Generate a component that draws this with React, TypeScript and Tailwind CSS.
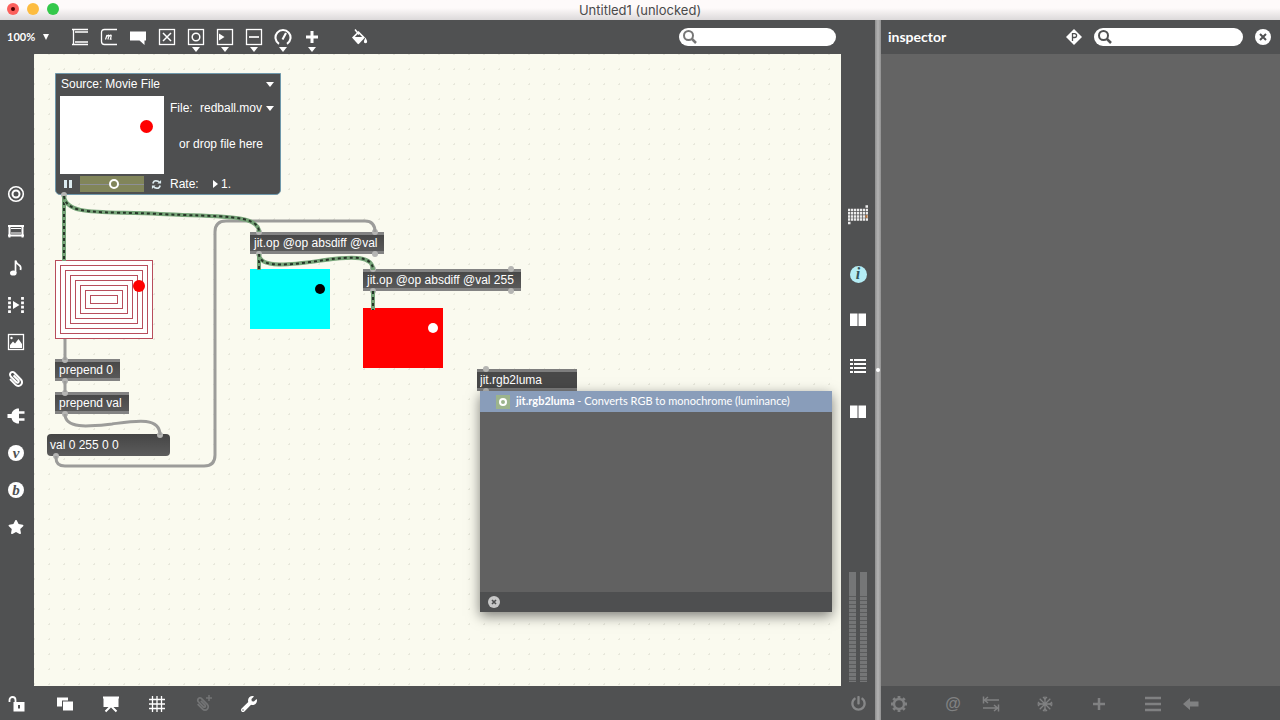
import type { ReactNode } from "react";
import { FaPaperclip, FaPowerOff, FaStar, FaWrench } from "react-icons/fa";

export default function App() {
  return (
    <div className="flex h-screen flex-col overflow-hidden bg-[#505152] font-['Lato',sans-serif] text-white">
      <TitleBar />
      <div className="flex min-h-0 flex-1">
        <main className="flex min-w-0 flex-1 flex-col">
          <Toolbar />
          <div className="flex min-h-0 flex-1">
            <ObjectBar />
            <Patcher />
            <PanelBar />
          </div>
          <PatcherFooter />
        </main>
        <div className="flex w-[6px] items-center justify-center bg-linear-to-r from-[#8f8f8f] via-[#b4b4b4] to-[#909090]">
          <span className="size-1 rounded-full bg-white" />
        </div>
        <Inspector />
      </div>
    </div>
  );
}

function TitleBar() {
  return (
    <header className="relative flex h-5 shrink-0 items-center justify-center bg-linear-to-b from-[#fefafa] from-40% to-[#dcd9da]">
      <div className="absolute top-[3px] left-[7px] flex gap-2">
        <button aria-label="Close" className="flex size-3 items-center justify-center rounded-full bg-[#fc605c]">
          <span className="size-1 rounded-full bg-[#4d0000]" />
        </button>
        <button aria-label="Minimize" className="size-3 rounded-full bg-[#fdbc40]" />
        <button aria-label="Zoom" className="size-3 rounded-full bg-[#34c84a]" />
      </div>
      <h1 className="font-['Inter',sans-serif] text-[13px] leading-[18px] text-[#4a4a4a]">Untitled1 (unlocked)</h1>
    </header>
  );
}

function Caret({ className = "" }: { className?: string }) {
  return (
    <svg viewBox="0 0 8 5" className={`pointer-events-none h-[5px] w-2 fill-current ${className}`}>
      <path d="M0 0h8L4 5z" />
    </svg>
  );
}

function Icon({ children, className = "" }: { children: ReactNode; className?: string }) {
  return (
    <svg viewBox="0 0 18 18" fill="none" stroke="currentColor" strokeWidth="1.3" className={`size-[18px] ${className}`}>
      {children}
    </svg>
  );
}

const TOOLS: { label: string; menu?: boolean; art: ReactNode }[] = [
  { label: "Object", art: <><path d="M17 1.500H1M17 16.500H1M2.500 1.500v15" /><path d="M4 4h13M4 14h13" /></> },
  {
    label: "Message",
    art: (
      <>
        <path d="M17 1.500H4.500q-3 0-3 3v9q0 3 3 3H17" />
        <path d="M5.500 11.500L7 7M6.700 8.500q2.300-2.600 2.200-.6l-1 3.600M8.700 8.500q2.600-2.600 2.500-.6l-.8 3.200h1.200" strokeWidth="1.200" />
      </>
    ),
  },
  { label: "Comment", art: <path d="M1 3.500h16v9h-1.500V17l-5-4.500H1z" fill="currentColor" stroke="none" /> },
  { label: "Toggle", art: <><rect x="1.500" y="1.500" width="15" height="15" /><path d="M5 5l8 8M13 5l-8 8" strokeWidth="1.500" /></> },
  { label: "Button", menu: true, art: <><rect x="1.500" y="1.500" width="15" height="15" /><circle cx="9" cy="9" r="3.800" strokeWidth="1.500" /></> },
  { label: "Playback", menu: true, art: <><rect x="1.500" y="1.500" width="15" height="15" /><path d="M3 5.500L8.500 9 3 12.500z" fill="currentColor" stroke="none" /></> },
  { label: "Slider", menu: true, art: <><rect x="1.500" y="1.500" width="15" height="15" /><path d="M4 9h10" strokeWidth="1.700" /></> },
  { label: "Dial", menu: true, art: <path d="M5 15.800a7.500 7.500 0 1 1 8 0M8.500 11.500l3.500-6.500" strokeWidth="2.100" /> },
  { label: "Add", menu: true, art: <path d="M9 3v12M3 9h12" strokeWidth="3" /> },
];

function Toolbar() {
  return (
    <div className="flex h-[34px] shrink-0 items-center pr-[39px]">
      <div className="relative ml-[7px] flex w-[42px] items-center">
        <select aria-label="Zoom level" className="w-full appearance-none bg-transparent text-[11px] font-bold">
          <option>100%</option>
        </select>
        <svg viewBox="0 0 6 6" className="pointer-events-none absolute right-0 size-[6px] fill-current"><path d="M0 0h6L3 6z" /></svg>
      </div>
      <div className="ml-4 flex">
        {TOOLS.map((t) => (
          <button key={t.label} aria-label={t.label} className="relative flex h-[34px] w-[29px] items-center justify-center">
            <Icon>{t.art}</Icon>
            {t.menu && <Caret className="absolute bottom-[2px]" />}
          </button>
        ))}
      </div>
      <button aria-label="Format" className="ml-[15px] flex w-9 justify-center">
        <Icon>
          <path d="M2 9.500L8.500 3l6.500 6.500L9 15.800q-.7.700-1.400 0z" fill="currentColor" stroke="none" />
          <path d="M4.800 9L8.500 5.300 12.200 9z" fill="#505152" stroke="none" />
          <path d="M5 1.500L9 6.500" strokeWidth="1.500" />
          <path d="M15.500 9.500q2 3.500 1.500 5-1.500 1.500-3 0-.4-1.500 1.500-5z" fill="currentColor" stroke="none" />
        </Icon>
      </button>
      <SearchBox label="Search patcher" className="ml-auto w-[157px] text-[#777]" />
    </div>
  );
}

function SearchBox({ label, className }: { label: string; className: string }) {
  return (
    <label className={`relative flex h-[18px] items-center rounded-full bg-white ${className}`}>
      <Icon className="absolute left-[2px]">
        <circle cx="7.500" cy="7.500" r="4.500" strokeWidth="2" />
        <path d="M11 11l4 4" strokeWidth="2.500" />
      </Icon>
      <input type="text" aria-label={label} className="w-full bg-transparent pr-2 pl-6 text-xs text-black outline-none" />
    </label>
  );
}

function Badge({ letter }: { letter: string }) {
  return (
    <span className="flex size-4 items-center justify-center rounded-full bg-white font-['Liberation_Serif',serif] text-[15px] leading-4 font-bold text-[#505152] italic">
      {letter}
    </span>
  );
}

const OBJECTS: { label: string; art: ReactNode }[] = [
  { label: "Objects", art: <Icon><circle cx="9" cy="9" r="7.300" strokeWidth="1.600" /><circle cx="9" cy="9" r="3.500" strokeWidth="2" /></Icon> },
  {
    label: "Devices",
    art: (
      <Icon>
        <path d="M1 4h16M1 13.500h16" strokeWidth="2" />
        <path d="M2.500 3v12.500M15.500 3v12.500" strokeWidth="2" />
        <path d="M4 6.500h10M4 11h10" strokeWidth="1" />
      </Icon>
    ),
  },
  {
    label: "Audio",
    art: <Icon><path d="M8.500 14V1.500q1 3 3.500 4.500t1.500 5" strokeWidth="1.700" /><ellipse cx="6.300" cy="14" rx="3.300" ry="2.600" fill="currentColor" stroke="none" /></Icon>,
  },
  {
    label: "Video",
    art: <Icon><path d="M2.500 1v16M15.500 1v16" strokeWidth="2.800" strokeDasharray="2.800 1.600" /><path d="M6 5l6.500 4L6 13z" fill="currentColor" stroke="none" /></Icon>,
  },
  {
    label: "Images",
    art: (
      <Icon>
        <rect x="1.500" y="1.500" width="15" height="15" />
        <path d="M3 15v-3l3-3.500 2 2L11.500 6l3.500 5v4z" fill="currentColor" stroke="none" />
        <circle cx="4.500" cy="5" r="1.200" fill="currentColor" stroke="none" />
      </Icon>
    ),
  },
  { label: "Clippings", art: <FaPaperclip className="size-4 -scale-x-100" /> },
  {
    label: "Plug-ins",
    art: (
      <Icon>
        <path d="M10 1.500h2v15h-2q-5-1.500-5.500-5.500H.5V7h4Q5 3 10 1.500z" fill="currentColor" stroke="none" />
        <path d="M11 5.500h6.500M11 12.500h6.500" strokeWidth="2.600" />
      </Icon>
    ),
  },
  { label: "Vizzie", art: <Badge letter="v" /> },
  { label: "BEAP", art: <Badge letter="b" /> },
  { label: "Favorites", art: <FaStar className="size-4" /> },
];

function ObjectBar() {
  return (
    <nav className="flex w-[34px] shrink-0 flex-col pt-[121px] pr-[2px]">
      {OBJECTS.map((o) => (
        <button key={o.label} aria-label={o.label} className="flex h-[37px] shrink-0 items-center justify-center">
          {o.art}
        </button>
      ))}
    </nav>
  );
}

function BookIcon() {
  return (
    <Icon>
      <path d="M1 2.500h7.500v12.500H1zM9.500 2.500H17v12.500H9.500z" fill="currentColor" stroke="none" />
    </Icon>
  );
}

function PanelBar() {
  return (
    <aside className="flex w-[34px] shrink-0 flex-col items-center pt-[138px]">
      <button aria-label="Keyboard" className="flex h-[46px] items-center">
        <svg viewBox="0 0 22 22" className="size-[22px]" fill="none" stroke="#ececec">
          <path d="M1 6h20M1 9.200h20M1 12.400h20M1 15.600h20" strokeWidth="2.500" strokeDasharray="2.300 .7" />
          <path d="M18.500 2.500h2.500M1 19h2.500" strokeWidth="2.500" />
          <path d="M18.500 12.500h2" stroke="#b97843" strokeWidth="3" />
        </svg>
      </button>
      <button aria-label="Inspector" className="mt-[13px] flex h-[46px] items-center">
        <span className="flex size-[17px] items-center justify-center rounded-full bg-[#b5edf5] font-['Liberation_Serif',serif] text-base leading-4 font-bold text-[#35565c] italic">
          i
        </span>
      </button>
      <button aria-label="Reference" className="flex h-[46px] items-center"><BookIcon /></button>
      <button aria-label="Console" className="flex h-[46px] items-center">
        <Icon>
          <path d="M1 3h3M1 7h3M1 11h3M1 15h3M5 3h12M5 7h12M5 11h12M5 15h12" strokeWidth="2" />
        </Icon>
      </button>
      <button aria-label="Lessons" className="flex h-[46px] items-center"><BookIcon /></button>
      <div className="mt-auto mb-1 flex gap-1">
        <Meter />
        <Meter />
      </div>
    </aside>
  );
}

function Meter() {
  return (
    <div className="w-[7px]">
      <div className="h-6 bg-[#757677]" />
      <div className="h-[86px] bg-[repeating-linear-gradient(#5b5c5d_0px,#5b5c5d_1px,#757677_1px,#757677_4px)]" />
    </div>
  );
}

function Patcher() {
  return (
    <section className="relative min-w-0 flex-1 overflow-hidden bg-[#fafaef] bg-[radial-gradient(circle,#e8e8dc_1px,transparent_1px)] bg-size-[15px_15px] bg-position-[-7px_-7px] font-['Liberation_Sans',sans-serif] text-xs">
      <MoviePlayer />

      <svg viewBox="0 0 98 79" className="absolute top-[206px] left-[21px] h-[79px] w-[98px]">
        <rect width="98" height="79" fill="#fff" />
        {[0, 5, 10, 15, 20, 25, 30, 35].map((n) => (
          <rect key={n} x={n + 0.5} y={n + 0.5} width={97 - n * 2} height={78 - n * 2} fill="none" stroke="#b84d5c" />
        ))}
        <circle cx="84" cy="26" r="6" fill="#f00" />
      </svg>
      <Display className="top-[215px] left-[216px] bg-[#00ffff]" ball="bg-black" />
      <Display className="top-[254px] left-[329px] bg-[#ff0000]" ball="bg-white" />

      <PatchObject className="top-[305px] left-[21px] w-[65px]">prepend 0</PatchObject>
      <PatchObject className="top-[338px] left-[21px] w-[74px]">prepend val</PatchObject>
      <PatchObject className="top-[178px] left-[216px] w-[134px]">jit.op @op absdiff @val</PatchObject>
      <PatchObject className="top-[215px] left-[329px] w-[158px]">jit.op @op absdiff @val 255</PatchObject>
      <div className="absolute top-[380px] left-[13px] h-[22px] w-[123px] rounded-[4px] bg-linear-to-b from-[#454545] to-[#5c5c5c] pl-[3px] leading-[22px]">
        val 0 255 0 0
      </div>
      <input
        type="text"
        aria-label="Object name"
        defaultValue="jit.rgb2luma"
        className="absolute top-[315px] left-[443px] h-[22px] w-[100px] border-y-[3px] border-[#7d7d7d] bg-[#484848] pl-[3px] leading-4 outline-none"
      />

      <Cables />
      <Autocomplete />
    </section>
  );
}

function PatchObject({ children, className }: { children: ReactNode; className: string }) {
  return (
    <div className={`absolute h-[22px] border-y-[3px] border-[#838383] bg-linear-to-b from-[#484848] to-[#595959] pl-1 leading-4 whitespace-nowrap ${className}`}>
      {children}
    </div>
  );
}

function Display({ className, ball }: { className: string; ball: string }) {
  return (
    <div className={`absolute h-[60px] w-20 ${className}`}>
      <span className={`absolute top-[15px] right-[5px] size-[10px] rounded-full ${ball}`} />
    </div>
  );
}

function MoviePlayer() {
  return (
    <div className="absolute top-[19px] left-[21px] w-[226px] rounded-b-[5px] border border-[#6f98ab] bg-[#4e4f50] px-1">
      <div className="relative mb-[2px] flex h-5 items-center">
        <label htmlFor="source" className="pr-[3px] pl-px">Source:</label>
        <select id="source" className="flex-1 appearance-none bg-transparent">
          <option>Movie File</option>
        </select>
        <Caret className="absolute right-[2px]" />
      </div>
      <div className="flex">
        <div className="relative h-[78px] w-[104px] bg-white">
          <span className="absolute top-6 right-[11px] size-[13px] rounded-full bg-[#ff0000]" />
        </div>
        <div className="flex-1 pl-[6px]">
          <div className="relative flex h-6 items-center">
            <label htmlFor="file" className="w-[30px]">File:</label>
            <select id="file" className="flex-1 appearance-none bg-transparent">
              <option>redball.mov</option>
            </select>
            <Caret className="absolute right-[2px]" />
          </div>
          <p className="mt-4 pr-1 text-center leading-4">or drop file here</p>
        </div>
      </div>
      <div className="flex h-5 items-center">
        <button aria-label="Pause" className="flex w-5 justify-center">
          <svg viewBox="0 0 8 8" className="mr-1 size-2 fill-[#dcebf0]"><path d="M0 0h3v8H0zM5 0h3v8H5z" /></svg>
        </button>
        <input
          type="range"
          aria-label="Position"
          defaultValue="54"
          className="h-4 w-16 appearance-none bg-[#81855a] bg-[linear-gradient(#8d8f96,#8d8f96)] bg-size-[100%_1px] bg-center bg-no-repeat [&::-webkit-slider-thumb]:size-[10px] [&::-webkit-slider-thumb]:appearance-none [&::-webkit-slider-thumb]:rounded-full [&::-webkit-slider-thumb]:border-2 [&::-webkit-slider-thumb]:border-white [&::-webkit-slider-thumb]:bg-[#81855a]"
        />
        <button aria-label="Loop" className="flex w-6 justify-center">
          <svg viewBox="0 0 12 12" className="size-[11px]" fill="none" stroke="#dcebf0" strokeWidth="1.800">
            <path d="M2 5q1-3.500 4-3 2 0 3 1.500M10 7q-1 3.500-4 3-2 0-3-1.500" />
            <path d="M11 1v4H7zM1 11V7h4z" fill="#dcebf0" stroke="none" />
          </svg>
        </button>
        <label htmlFor="rate" className="w-[45px] pl-[2px]">Rate:</label>
        <svg viewBox="0 0 5 8" className="mr-[3px] h-2 w-[5px] fill-white"><path d="M0 0l5 4-5 4z" /></svg>
        <input id="rate" type="text" defaultValue="1." className="w-8 bg-transparent outline-none" />
      </div>
    </div>
  );
}

const MESSAGE_CABLES = [
  "M31 285V306",
  "M31 327V338",
  "M31 360C31 376 58 372 78 370C100 367 126 362 126 381",
  "M22 402V404Q22 412 31 412H170Q181 412 181 401V178Q181 167 192 167H331Q341 167 341 178",
];

const MATRIX_CABLES = [
  "M30 142V207",
  "M30 142C32 162 66 157 126 160C186 163 225 160 225 178",
  "M225 200V216",
  "M225 200C225 216 262 210 291 206C320 202 339 202 339 216",
  "M339 237V256",
];

const PORTS = [
  [30, 141], [31, 306], [31, 327], [31, 339], [31, 360], [126, 381], [22, 402],
  [225, 178], [341, 178], [225, 200], [341, 200], [339, 215], [477, 215], [339, 237], [477, 237],
  [452, 315], [452, 337],
];

function Cables() {
  return (
    <svg className="pointer-events-none absolute inset-0 size-full" fill="none">
      {PORTS.map(([x, y]) => (
        <circle key={`${x}-${y}`} cx={x} cy={y} r="3" fill="#b5b5b3" />
      ))}
      {MESSAGE_CABLES.map((d) => (
        <path key={d} d={d} stroke="#9c9c9a" strokeWidth="3" />
      ))}
      {MATRIX_CABLES.map((d) => (
        <g key={d}>
          <path d={d} stroke="#76a478" strokeWidth="4" />
          <path d={d} stroke="#263527" strokeWidth="2" strokeDasharray="3 3" />
        </g>
      ))}
    </svg>
  );
}

function Autocomplete() {
  return (
    <div className="absolute top-[337px] left-[446px] flex h-[221px] w-[352px] flex-col bg-[#616161] font-['Lato',sans-serif] shadow-[0_4px_12px_rgba(0,0,0,0.5)]">
      <button className="flex h-[21px] items-center bg-[#899dba] pl-4 text-left text-[11px]">
        <span className="mr-[6px] flex size-[14px] items-center justify-center bg-[#9cb48c]">
          <span className="size-2 rounded-full border-2 border-white" />
        </span>
        <span className="whitespace-pre"><b>jit.rgb2luma</b> - Converts RGB to monochrome (luminance)</span>
      </button>
      <div className="mt-auto flex h-5 items-center bg-[#4e4f50] pl-2">
        <button aria-label="Dismiss" className="rounded-full bg-[#c8c8c8]">
          <svg viewBox="0 0 12 12" className="size-3" stroke="#4e4f50" strokeWidth="1.600"><path d="M4 4l4 4M8 4l-4 4" /></svg>
        </button>
      </div>
    </div>
  );
}

const VIEW_BUTTONS: { label: string; art: ReactNode }[] = [
  { label: "New view", art: <Icon><path d="M1 2.500h11v3H6v6H1z" fill="currentColor" stroke="none" /><path d="M7 6.500h10v9H7z" fill="currentColor" stroke="none" /></Icon> },
  { label: "Presentation", art: <Icon><path d="M1 1.500h16v2h-.5v8.500h-15V3.500H1z" fill="currentColor" stroke="none" /><path d="M9 11l-5.500 5.500M9 11l5.500 5.500" strokeWidth="2" /></Icon> },
  { label: "Grid", art: <Icon><path d="M4.500 1v16M9 1v16M13.500 1v16M1 4.500h16M1 9h16M1 13.500h16" /></Icon> },
  {
    label: "Add clipping",
    art: (
      <span className="relative text-[#737475]">
        <FaPaperclip className="size-[14px] -scale-x-100" />
        <svg viewBox="0 0 6 6" className="absolute -top-[2px] -right-[2px] size-[6px]" stroke="currentColor" strokeWidth="1.500"><path d="M3 0v6M0 3h6" /></svg>
      </span>
    ),
  },
  { label: "Tools", art: <FaWrench className="size-4" /> },
];

function PatcherFooter() {
  return (
    <footer className="flex h-[34px] shrink-0 items-center pt-px">
      <button aria-label="Lock" className="mr-2 flex w-[34px] justify-center">
        <Icon>
          <path d="M1.500 7V5a3 3 0 0 1 6 0V9" strokeWidth="1.800" />
          <path fillRule="evenodd" d="M5.500 7h11v9.500h-11zM10 10v3.500h2V10z" fill="currentColor" stroke="none" />
        </Icon>
      </button>
      {VIEW_BUTTONS.map((b) => (
        <button key={b.label} aria-label={b.label} className="flex w-[46px] justify-center">
          {b.art}
        </button>
      ))}
      <button aria-label="Audio on/off" className="ml-auto flex w-[34px] justify-center text-[#868788]">
        <FaPowerOff className="size-[15px]" />
      </button>
    </footer>
  );
}

function Inspector() {
  return (
    <aside className="flex w-[399px] shrink-0 flex-col bg-[#646464]">
      <div className="flex h-[34px] shrink-0 items-center bg-[#505152] pr-[9px] pl-[7px]">
        <h2 className="flex-1 text-sm font-bold">inspector</h2>
        <button aria-label="Prototypes" className="mr-3 flex">
          <svg viewBox="0 0 16 16" className="size-4" fill="#fff">
            <path d="M8 0l8 8-8 8-8-8z" />
            <path d="M6.500 12V4.700h2.200a1.900 1.900 0 0 1 0 3.800H6.500" fill="none" stroke="#505152" strokeWidth="1.300" />
          </svg>
        </button>
        <SearchBox label="Search inspector" className="mr-3 w-[149px] text-[#505152]" />
        <button aria-label="Close inspector" className="flex">
          <svg viewBox="0 0 16 16" className="size-4" stroke="#505152" strokeWidth="2">
            <circle cx="8" cy="8" r="8" fill="#fff" stroke="none" />
            <path d="M5 5l6 6M11 5l-6 6" />
          </svg>
        </button>
      </div>
      <div className="flex-1" />
      <div className="flex h-[34px] shrink-0 items-center gap-[18px] bg-[#505152] pt-px text-[#808182]">
        <InspectorButton label="Settings">
          <Icon>
            <circle cx="9" cy="9" r="5" strokeWidth="2.400" />
            <path d="M9 1v2.500M9 14.500V17M1 9h2.500M14.500 9H17M3.300 3.300l1.800 1.800M12.900 12.900l1.800 1.800M14.700 3.300l-1.800 1.800M5.100 12.900l-1.800 1.800" strokeWidth="2.800" />
          </Icon>
        </InspectorButton>
        <div className="flex items-center gap-[2px]">
          <InspectorButton label="Attributes">
            <span className="font-['Liberation_Sans',sans-serif] text-base leading-[18px] font-bold">@</span>
          </InspectorButton>
          <InspectorButton label="Inlets and outlets">
            <Icon><path d="M1.500 1.500v7M2 5h15M6 2L2.500 5 6 8M16.500 9.500v7M1 13h15M12 10l3.500 3-3.500 3" strokeWidth="1.500" /></Icon>
          </InspectorButton>
        </div>
        <InspectorButton label="Freeze">
          <Icon>
            <path d="M9 1.500v15M1.500 9h15M3.700 3.700l10.600 10.600M14.300 3.700L3.700 14.300" />
            <path d="M7 2l2 2 2-2M7 16l2-2 2 2M2 7l2 2-2 2M16 7l-2 2 2 2" />
          </Icon>
        </InspectorButton>
        <InspectorButton label="Add">
          <Icon><path d="M9 3v12M3 9h12" strokeWidth="2.500" /></Icon>
        </InspectorButton>
        <div className="flex gap-[2px]">
          <InspectorButton label="List"><Icon><path d="M1 3h16M1 9h16M1 15h16" strokeWidth="2.300" /></Icon></InspectorButton>
          <InspectorButton label="Back">
            <Icon><path d="M1 9l7-6v3.500h8.500v5H8V15z" fill="currentColor" stroke="none" /></Icon>
          </InspectorButton>
        </div>
      </div>
    </aside>
  );
}

function InspectorButton({ label, children }: { label: string; children: ReactNode }) {
  return (
    <button aria-label={label} className="flex w-9 justify-center">
      {children}
    </button>
  );
}
